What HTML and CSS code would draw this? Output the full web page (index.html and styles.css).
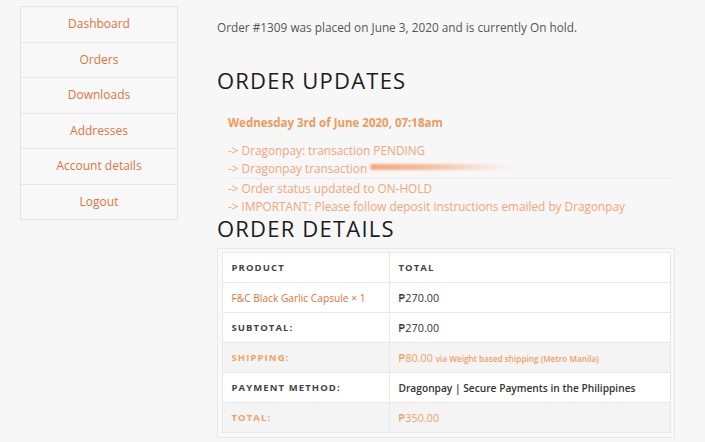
FILE: index.html
```html
<!DOCTYPE html>
<html>
<head>
<meta charset="utf-8">
<link rel="stylesheet" href="styles.css">
</head>
<body>
<div class="page">
  <nav class="side">
    <a class="nav-item">Dashboard</a>
    <a class="nav-item">Orders</a>
    <a class="nav-item">Downloads</a>
    <a class="nav-item">Addresses</a>
    <a class="nav-item">Account details</a>
    <a class="nav-item">Logout</a>
  </nav>
  <main class="main">
    <p class="intro">Order #1309 was placed on June 3, 2020 and is currently On hold.</p>
    <h2 class="heading h-updates">ORDER UPDATES</h2>
    <div class="updates">
      <div class="upd-date">Wednesday 3rd of June 2020, 07:18am</div>
      <div class="upd-lines">
        <div class="upd-line">-&gt; Dragonpay: transaction PENDING</div>
        <div class="upd-line">-&gt; Dragonpay transaction <span class="smear"></span></div>
        <div class="upd-line dotted">-&gt; Order status updated to ON-HOLD</div>
        <div class="upd-line">-&gt; IMPORTANT: Please follow deposit instructions emailed by Dragonpay</div>
      </div>
    </div>
    <h2 class="heading h-details">ORDER DETAILS</h2>
    <div class="table-wrap">
      <table class="order">
        <tr class="row">
          <th class="cell label">PRODUCT</th>
          <th class="cell label">TOTAL</th>
        </tr>
        <tr class="row">
          <td class="cell link">F&amp;C Black Garlic Capsule × 1</td>
          <td class="cell val">₱270.00</td>
        </tr>
        <tr class="row">
          <td class="cell label">SUBTOTAL:</td>
          <td class="cell val">₱270.00</td>
        </tr>
        <tr class="row alt orange">
          <td class="cell label">SHIPPING:</td>
          <td class="cell val">₱80.00 <small class="via">via Weight based shipping (Metro Manila)</small></td>
        </tr>
        <tr class="row">
          <td class="cell label">PAYMENT METHOD:</td>
          <td class="cell val strong">Dragonpay | Secure Payments in the Philippines</td>
        </tr>
        <tr class="row alt orange">
          <td class="cell label">TOTAL:</td>
          <td class="cell val">₱350.00</td>
        </tr>
      </table>
    </div>
  </main>
</div>
</body>
</html>
```
FILE: styles.css
```css
html, body {
  margin: 0;
  padding: 0;
  background: #f7f7f7;
  font-family: "Open Sans", "DejaVu Sans", sans-serif;
}
.page {
  display: flex;
  align-items: flex-start;
  padding: 6px 0 0 20px;
  gap: 39px;
}
.side {
  width: 156px;
  border: 1px solid #e4e4e4;
  display: flex;
  flex-direction: column;
  background: #f8f8f8;
}
.nav-item {
  display: block;
  height: 34.5px;
  line-height: 34.5px;
  text-align: center;
  color: #e0743c;
  font-size: 12px;
  border-top: 1px solid #e6e6e6;
}
.nav-item:first-child {
  border-top: none;
}
.main {
  width: 458px;
  padding-top: 13px;
}
.intro {
  margin: 0;
  font-size: 11.8px;
  line-height: 16px;
  color: #555;
}
.heading {
  margin: 0;
  font-weight: 500;
  font-size: 22px;
  letter-spacing: 1.2px;
  color: #1c1c1c;
  line-height: 28px;
}
.h-updates {
  margin-top: 31px;
}
.updates {
  padding: 21px 0 0 11px;
}
.upd-date {
  color: #f09a5c;
  font-weight: 700;
  font-size: 11.5px;
  line-height: 16px;
}
.upd-lines {
  margin-top: 10px;
}
.upd-line {
  color: #f3a677;
  font-size: 11.8px;
  line-height: 18.4px;
  white-space: nowrap;
}
.dotted {
  border-top: 1px dotted #e2e2e2;
}
.smear {
  display: inline-block;
  width: 145px;
  height: 6px;
  vertical-align: 3px;
  border-radius: 3px;
  filter: blur(0.8px);
  background: linear-gradient(90deg, rgba(243,160,110,0.9) 0%, rgba(245,170,125,0.75) 40%, rgba(247,200,170,0.3) 80%, rgba(247,247,247,0) 100%);
}
.h-details {
  margin-top: 1px;
  line-height: 22px;
}
.table-wrap {
  margin-top: 9px;
  border: 1.5px solid #e8e8e8;
  padding: 3.5px;
  background: #f9f9f9;
}
.order {
  width: 100%;
  border-collapse: collapse;
  background: #fff;
  border: 1.5px solid #e6e6e6;
}
.row.alt {
  background: #f4f4f4;
}
.cell {
  height: 29px;
  padding: 0 0 0 9px;
  border: 1.5px solid #e8e8e8;
  text-align: left;
  font-size: 10.5px;
  color: #333;
}
.cell:first-child {
  width: 157px;
}
.label {
  font-size: 9.5px;
  font-weight: 700;
  letter-spacing: 1.1px;
  color: #444;
}
.link {
  color: #e0743c;
  font-size: 10.2px;
}
.val {
  font-size: 10.8px;
  color: #333;
}
.strong {
  font-weight: 600;
  font-size: 10.2px;
  color: #333;
}
.orange .label, .orange .val {
  color: #f2a064;
}
.via {
  font-size: 8.2px;
  font-weight: 600;
}
```
